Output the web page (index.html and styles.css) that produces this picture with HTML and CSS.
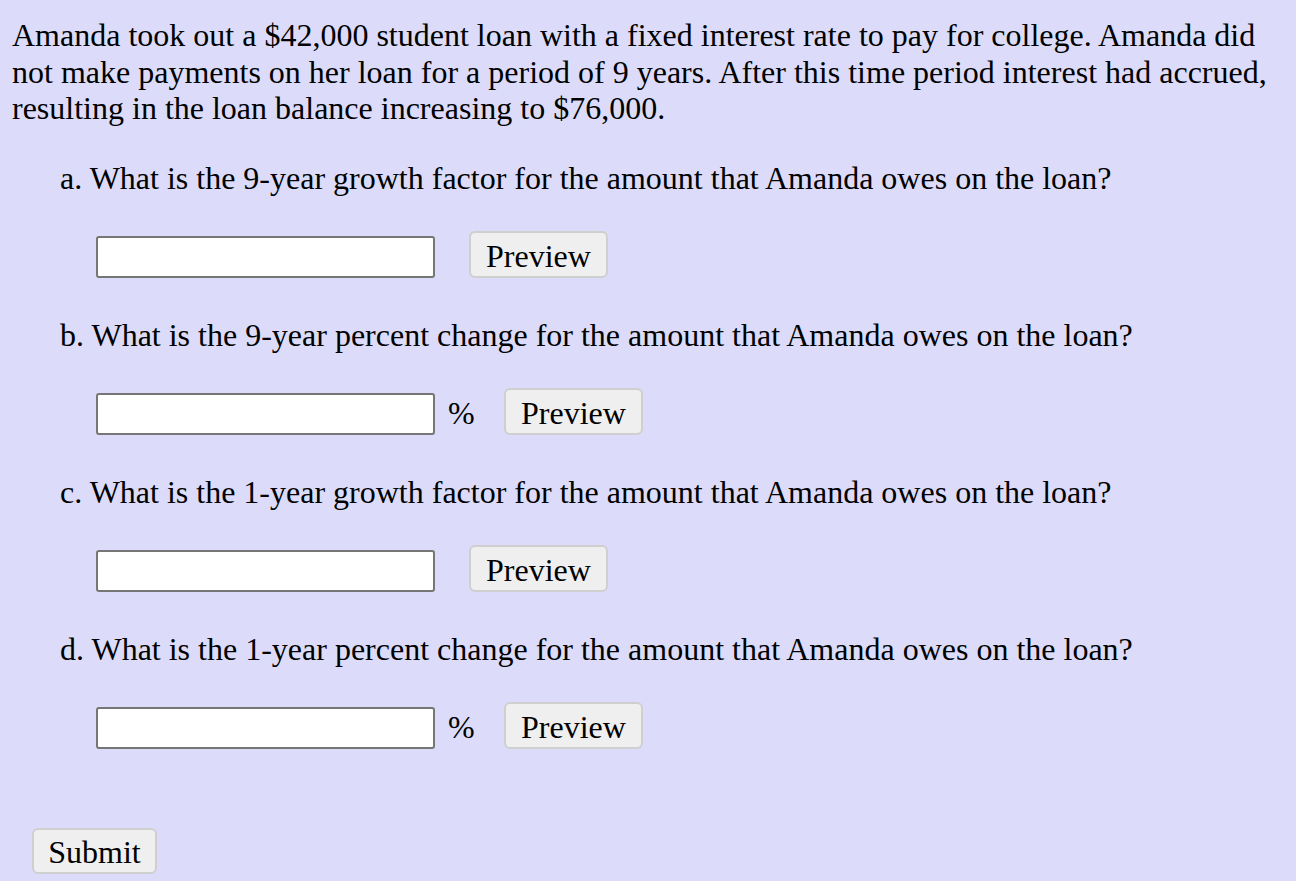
FILE: index.html
```html
<!DOCTYPE html>
<html>
<head>
<meta charset="utf-8">
<link rel="stylesheet" href="styles.css">
</head>
<body>
<div class="page">
  <p class="intro">Amanda took out a $42,000 student loan with a fixed interest rate to pay for college. Amanda did not make payments on her loan for a period of 9 years. After this time period interest had accrued, resulting in the loan balance increasing to $76,000.</p>

  <div class="q">
    <p class="qtext">a. What is the 9-year growth factor for the amount that Amanda owes on the loan?</p>
    <div class="row">
      <input class="ans" type="text">
      <button class="btn btn-a">Preview</button>
    </div>
  </div>

  <div class="q">
    <p class="qtext">b. What is the 9-year percent change for the amount that Amanda owes on the loan?</p>
    <div class="row">
      <input class="ans" type="text">
      <span class="pct">%</span>
      <button class="btn">Preview</button>
    </div>
  </div>

  <div class="q">
    <p class="qtext">c. What is the 1-year growth factor for the amount that Amanda owes on the loan?</p>
    <div class="row">
      <input class="ans" type="text">
      <button class="btn btn-a">Preview</button>
    </div>
  </div>

  <div class="q">
    <p class="qtext">d. What is the 1-year percent change for the amount that Amanda owes on the loan?</p>
    <div class="row">
      <input class="ans" type="text">
      <span class="pct">%</span>
      <button class="btn">Preview</button>
    </div>
  </div>

  <div class="submit-row">
    <button class="btn submit">Submit</button>
  </div>
</div>
</body>
</html>
```

FILE: styles.css
```css
html, body {
  margin: 0;
  padding: 0;
  background: #dcdcfa;
}
body {
  font-family: "Liberation Serif", "Times New Roman", serif;
  font-size: 32px;
  color: #000;
}
.page {
  padding: 17px 12px 0 12px;
}
.intro {
  margin: 0;
  line-height: 36.5px;
}
.q {
  margin-top: 33px;
  padding-left: 48px;
}
.q + .q {
  margin-top: 39px;
}
.qtext {
  margin: 0;
  line-height: 36px;
}
.row {
  display: flex;
  align-items: flex-end;
  margin-top: 35px;
  padding-left: 36px;
}
.ans {
  box-sizing: border-box;
  width: 339px;
  height: 42px;
  margin: 0;
  border: 2px solid #767676;
  border-radius: 3px;
  background: #fff;
  font-family: inherit;
  font-size: 28px;
  padding: 0 6px;
}
.pct {
  margin-left: 13px;
  line-height: 40px;
  padding-bottom: 2px;
  width: 26px;
}
.btn {
  box-sizing: border-box;
  margin: 0 0 0 30px;
  width: 139px;
  height: 47px;
  border: 2px solid #cfcfcf;
  border-radius: 6px;
  background: #efefef;
  font-family: "Liberation Serif", "Times New Roman", serif;
  font-size: 32px;
  color: #000;
  padding: 4px 0 0 0;
}
.btn-a {
  margin-left: 34px;
}
.submit-row {
  margin-top: 79px;
  padding-left: 20px;
  display: flex;
}
.submit {
  margin: 0;
  width: 125px;
  height: 46px;
  padding-top: 3px;
}
```
